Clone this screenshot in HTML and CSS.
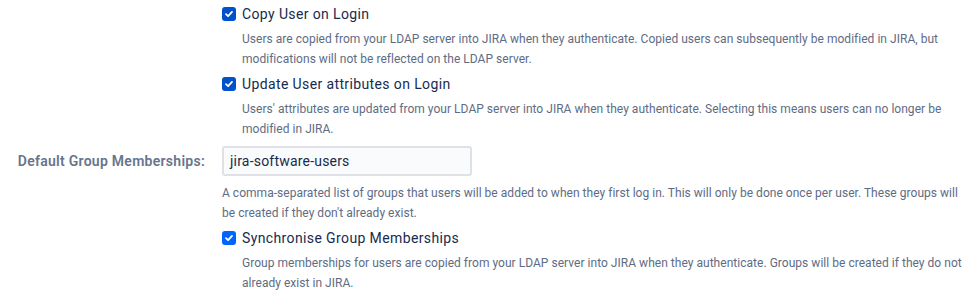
FILE: index.html
```html
<!DOCTYPE html>
<html>
<head>
<meta charset="utf-8">
<link rel="stylesheet" href="styles.css">
</head>
<body>
<form class="form">
  <div class="row">
    <div class="label"></div>
    <div class="field">
      <label class="check">
        <span class="box"><svg viewBox="0 0 14 14" width="14" height="14"><path d="M4 7.2 L6.1 9.2 L10 4.9" fill="none" stroke="#fff" stroke-width="1.8" stroke-linecap="round" stroke-linejoin="round"/></svg></span>
        <span class="check-text">Copy User on Login</span>
      </label>
      <div class="desc">Users are copied from your LDAP server into JIRA when they authenticate. Copied users can subsequently be modified in JIRA, but<br>modifications will not be reflected on the LDAP server.</div>
    </div>
  </div>
  <div class="row">
    <div class="label"></div>
    <div class="field">
      <label class="check">
        <span class="box"><svg viewBox="0 0 14 14" width="14" height="14"><path d="M4 7.2 L6.1 9.2 L10 4.9" fill="none" stroke="#fff" stroke-width="1.8" stroke-linecap="round" stroke-linejoin="round"/></svg></span>
        <span class="check-text">Update User attributes on Login</span>
      </label>
      <div class="desc">Users' attributes are updated from your LDAP server into JIRA when they authenticate. Selecting this means users can no longer be<br>modified in JIRA.</div>
    </div>
  </div>
  <div class="row row-input">
    <div class="label">Default Group Memberships:</div>
    <div class="field">
      <div class="input">jira-software-users</div>
      <div class="desc">A comma-separated list of groups that users will be added to when they first log in. This will only be done once per user. These groups will<br>be created if they don't already exist.</div>
    </div>
  </div>
  <div class="row row-sync">
    <div class="label"></div>
    <div class="field">
      <label class="check">
        <span class="box box-focus"><svg viewBox="0 0 14 14" width="14" height="14"><path d="M4 7.2 L6.1 9.2 L10 4.9" fill="none" stroke="#fff" stroke-width="1.8" stroke-linecap="round" stroke-linejoin="round"/></svg></span>
        <span class="check-text">Synchronise Group Memberships</span>
      </label>
      <div class="desc">Group memberships for users are copied from your LDAP server into JIRA when they authenticate. Groups will be created if they do not<br>already exist in JIRA.</div>
    </div>
  </div>
</form>
</body>
</html>
```
FILE: styles.css
```css
html, body {
  margin: 0;
  padding: 0;
  background: #fff;
}
body {
  font-family: Roboto, "Liberation Sans", sans-serif;
  color: #172b4d;
  width: 962px;
  height: 301px;
  overflow: hidden;
}
.form {
  display: flex;
  flex-direction: column;
  padding-top: 4px;
  gap: 5px;
}
.row {
  display: grid;
  grid-template-columns: 205px 1fr;
  column-gap: 17px;
  align-items: start;
}
.label {
  text-align: right;
  font-size: 14px;
  font-weight: 600;
  letter-spacing: 0.27px;
  color: #66758c;
  line-height: 30px;
  white-space: nowrap;
}
.field {
  display: flex;
  flex-direction: column;
  gap: 5px;
  min-width: 0;
}
.check {
  display: flex;
  align-items: center;
  height: 20px;
  gap: 6px;
}
.box {
  width: 14px;
  height: 14px;
  border-radius: 3px;
  background: #0052cc;
  display: flex;
}
.box-focus {
  background: #0065ff;
}
.check-text {
  font-size: 14px;
  line-height: 20px;
  letter-spacing: 0.38px;
  color: #172b4d;
}
.desc {
  font-size: 12px;
  line-height: 20px;
  letter-spacing: 0.03px;
  color: #5e6c84;
  padding-left: 20px;
  white-space: nowrap;
}
.row-input .desc {
  padding-left: 0;
  margin-top: 2px;
}
.row-input {
  margin-top: 2px;
}
.input {
  width: 250px;
  height: 30px;
  box-sizing: border-box;
  border: 2px solid #dfe1e6;
  border-radius: 3px;
  background: #fafbfc;
  font-size: 14px;
  line-height: 26px;
  letter-spacing: 0.2px;
  padding: 0 6px;
  color: #172b4d;
}
```
